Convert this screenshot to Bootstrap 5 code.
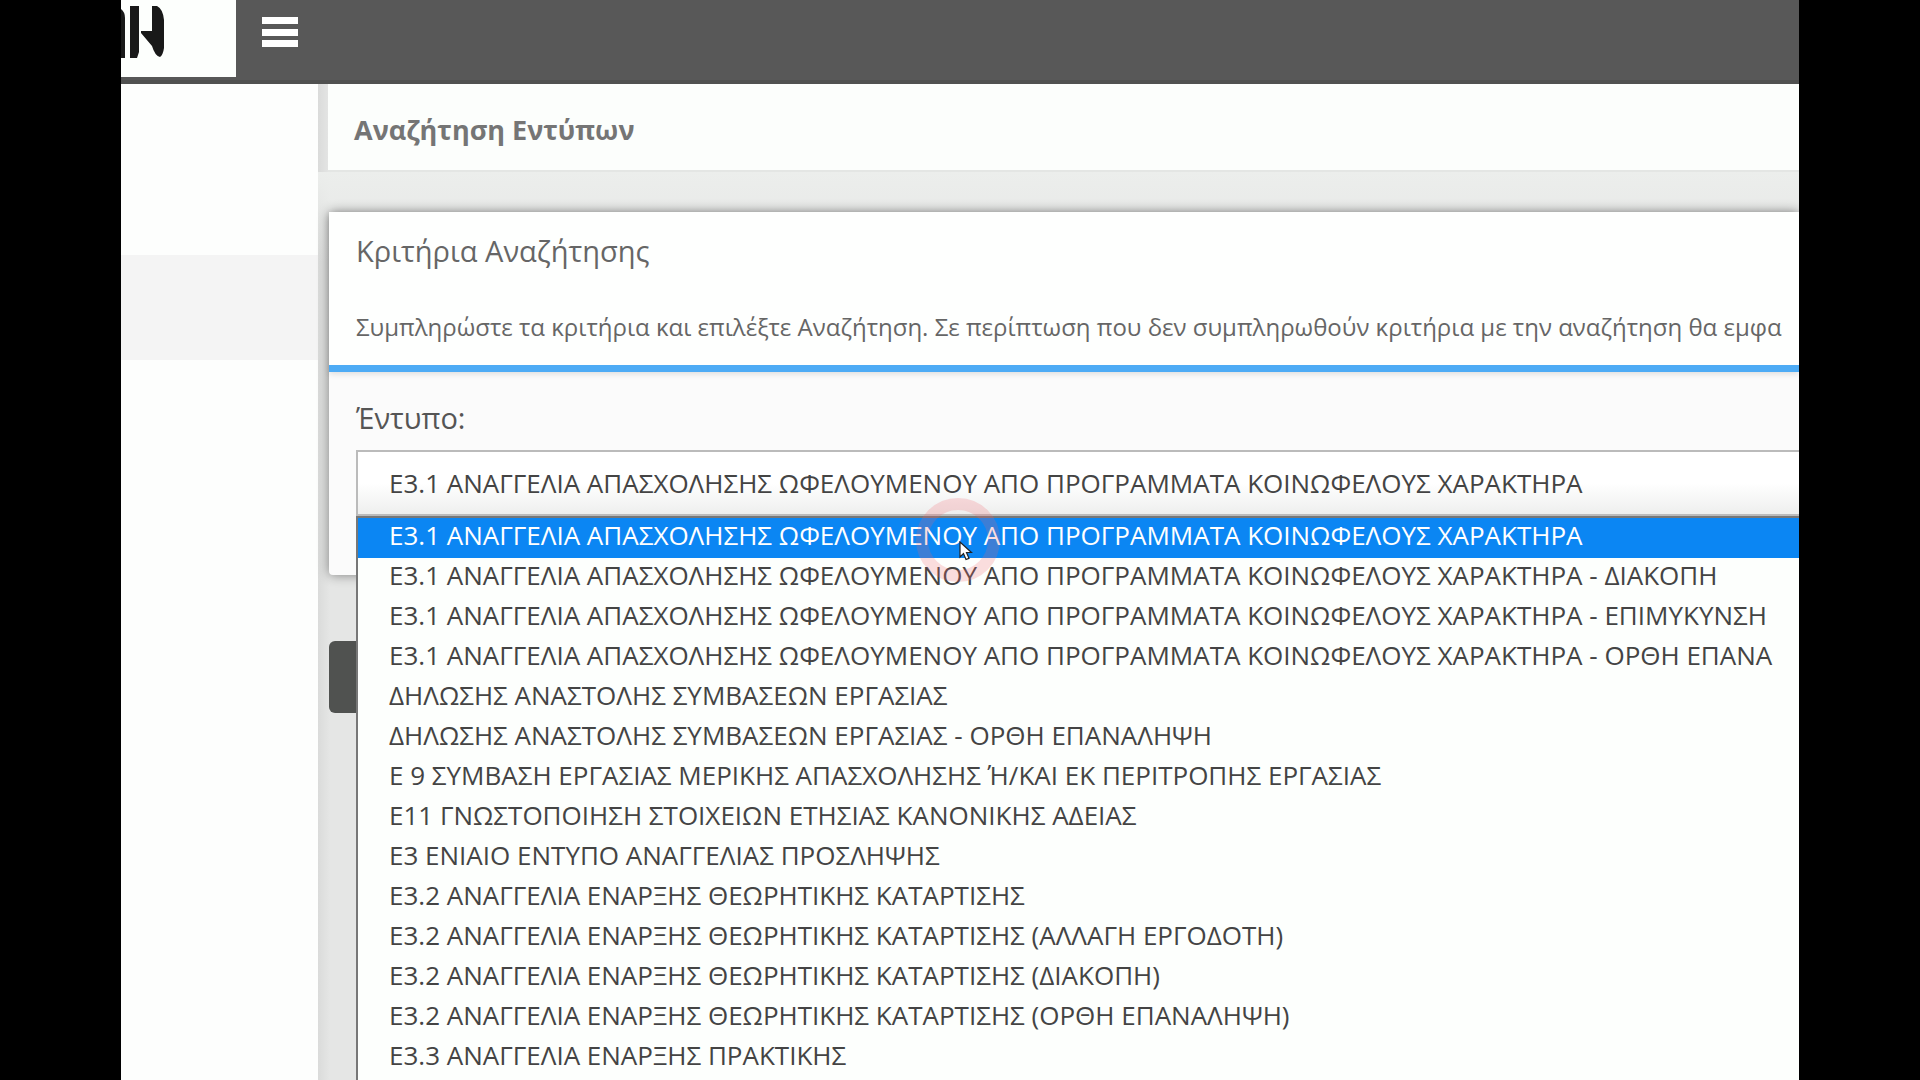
<!DOCTYPE html>
<html lang="el">
<head>
<meta charset="utf-8">
<meta name="viewport" content="width=device-width, initial-scale=1">
<title>Αναζήτηση Εντύπων</title>
<link rel="stylesheet" href="https://cdn.jsdelivr.net/npm/bootstrap@5.3.0/dist/css/bootstrap.min.css">
<style>
body{background:#000;font-family:"Open Sans","Noto Sans",sans-serif;color:#555;padding:0 121px}
.app-shell{background:#fdfefd}
.topbar{background:#585858;border-bottom:4px solid #505150;height:84px}
.brand-box{background:#fdfffd;width:115px;height:77px}
.menu-btn{width:36px;margin-left:26px;margin-top:17px}
.side-nav{width:197px;padding-top:171px}
.side-current{height:105px;background:#f4f4f4}
.content-area{background:linear-gradient(90deg,#dadbda,#e5e6e5 12px);min-width:0}
.page-title{background:#fcfefc;border-bottom:2px solid #e4e6e4;margin-left:10px;height:88px;padding:6px 0 0 26px;font-size:27px;font-weight:700;color:#757575}
.page-body{padding:40px 0 0 11px;background:linear-gradient(#eceeec,rgba(236,238,236,0) 90px)}
.search-card{background:#fbfbfb;border-radius:4px;box-shadow:0 0 12px rgba(0,0,0,.45);padding-bottom:59px}
.criteria-head{background:#fefffe;border-bottom:7px solid #4dabf5;padding:20px 0 20px 27px;box-shadow:0 2px 6px rgba(0,0,0,.12)}
.criteria-title{font-size:29px;line-height:38px;color:#666}
.criteria-note{font-size:24px;line-height:36px;margin-top:39px;color:#666}
.criteria-form{padding:28px 0 0 27px}
.form-type-label{font-size:29px;line-height:36px;margin-bottom:14px;color:#555}
.form-type{font-size:26px;height:66px;border:2px solid #bbb;border-right:0;border-radius:0;padding:0 0 0 31px;color:#444;appearance:none;background:linear-gradient(#fff 50%,#eeefee)}
.type-menu{left:0;right:0;top:100%;border:0;border-left:2px solid #777;border-top:2px solid #777;border-radius:0;padding:0 0 12px;margin:0;background:#fdfffd;min-width:0}
.type-menu .dropdown-item{font-size:26px;line-height:34px;padding:0 0 6px 31px;color:#444}
.type-menu .dropdown-item.active{background:#0b86f3;color:#fff}
.search-btn{background:#505250;border:0;border-radius:6px;color:#fff;font-size:26px;height:72px;width:220px;margin-top:66px}
.click-ring{width:84px;height:84px;left:560px;top:48px;border:12px solid rgba(240,100,110,.22);border-radius:50%;z-index:1100}
.pointer-arrow{left:603px;top:91px;z-index:1101}
</style>
</head>
<body class="vh-100 overflow-hidden">
<div class="app-shell vh-100 overflow-hidden d-flex flex-column">
<header class="topbar d-flex align-items-start flex-shrink-0">
<a class="brand-box d-block" href="#" aria-label="Αρχική"><svg width="50" height="66" viewBox="0 0 50 66" fill="#191919"><path d="M0 9Q4 12 4 18V58H0ZM9 6H18V52L16 58H9ZM31 6H36Q42 9 43 20V48Q42 55 39 57Q34 56 31 46L20 33V31H31Z"/></svg></a>
<button class="menu-btn btn p-0 border-0 d-flex" aria-label="Μενού"><svg width="36" height="30" fill="#fff"><path d="M0 0h36v7H0zM0 12h36v7H0zM0 23h36v7H0z"/></svg></button>
</header>
<div class="d-flex flex-grow-1">
<nav class="side-nav flex-shrink-0" aria-label="Πλοήγηση"><div class="side-current"></div></nav>
<main class="content-area flex-grow-1">
<h1 class="page-title d-flex align-items-center mb-0">Αναζήτηση Εντύπων</h1>
<div class="page-body">
<section class="search-card">
<div class="criteria-head">
<h2 class="criteria-title mb-0 fw-normal">Κριτήρια Αναζήτησης</h2>
<p class="criteria-note mb-0 text-nowrap overflow-hidden">Συμπληρώστε τα κριτήρια και επιλέξτε Αναζήτηση. Σε περίπτωση που δεν συμπληρωθούν κριτήρια με την αναζήτηση θα εμφα</p>
</div>
<div class="criteria-form">
<label class="form-type-label d-block" for="formType">Έντυπο:</label>
<div class="position-relative">
<select class="form-type w-100 d-block" id="formType"><option>Ε3.1 ΑΝΑΓΓΕΛΙΑ ΑΠΑΣΧΟΛΗΣΗΣ ΩΦΕΛΟΥΜΕΝΟΥ ΑΠΟ ΠΡΟΓΡΑΜΜΑΤΑ ΚΟΙΝΩΦΕΛΟΥΣ ΧΑΡΑΚΤΗΡΑ</option></select>
<ul class="type-menu dropdown-menu show">
<li><button class="dropdown-item active">Ε3.1 ΑΝΑΓΓΕΛΙΑ ΑΠΑΣΧΟΛΗΣΗΣ ΩΦΕΛΟΥΜΕΝΟΥ ΑΠΟ ΠΡΟΓΡΑΜΜΑΤΑ ΚΟΙΝΩΦΕΛΟΥΣ ΧΑΡΑΚΤΗΡΑ</button></li>
<li><button class="dropdown-item">Ε3.1 ΑΝΑΓΓΕΛΙΑ ΑΠΑΣΧΟΛΗΣΗΣ ΩΦΕΛΟΥΜΕΝΟΥ ΑΠΟ ΠΡΟΓΡΑΜΜΑΤΑ ΚΟΙΝΩΦΕΛΟΥΣ ΧΑΡΑΚΤΗΡΑ - ΔΙΑΚΟΠΗ</button></li>
<li><button class="dropdown-item">Ε3.1 ΑΝΑΓΓΕΛΙΑ ΑΠΑΣΧΟΛΗΣΗΣ ΩΦΕΛΟΥΜΕΝΟΥ ΑΠΟ ΠΡΟΓΡΑΜΜΑΤΑ ΚΟΙΝΩΦΕΛΟΥΣ ΧΑΡΑΚΤΗΡΑ - ΕΠΙΜΥΚΥΝΣΗ</button></li>
<li><button class="dropdown-item">Ε3.1 ΑΝΑΓΓΕΛΙΑ ΑΠΑΣΧΟΛΗΣΗΣ ΩΦΕΛΟΥΜΕΝΟΥ ΑΠΟ ΠΡΟΓΡΑΜΜΑΤΑ ΚΟΙΝΩΦΕΛΟΥΣ ΧΑΡΑΚΤΗΡΑ - ΟΡΘΗ ΕΠΑΝΑ</button></li>
<li><button class="dropdown-item">ΔΗΛΩΣΗΣ ΑΝΑΣΤΟΛΗΣ ΣΥΜΒΑΣΕΩΝ ΕΡΓΑΣΙΑΣ</button></li>
<li><button class="dropdown-item">ΔΗΛΩΣΗΣ ΑΝΑΣΤΟΛΗΣ ΣΥΜΒΑΣΕΩΝ ΕΡΓΑΣΙΑΣ - ΟΡΘΗ ΕΠΑΝΑΛΗΨΗ</button></li>
<li><button class="dropdown-item">Ε 9 ΣΥΜΒΑΣΗ ΕΡΓΑΣΙΑΣ ΜΕΡΙΚΗΣ ΑΠΑΣΧΟΛΗΣΗΣ Ή/ΚΑΙ ΕΚ ΠΕΡΙΤΡΟΠΗΣ ΕΡΓΑΣΙΑΣ</button></li>
<li><button class="dropdown-item">Ε11 ΓΝΩΣΤΟΠΟΙΗΣΗ ΣΤΟΙΧΕΙΩΝ ΕΤΗΣΙΑΣ ΚΑΝΟΝΙΚΗΣ ΑΔΕΙΑΣ</button></li>
<li><button class="dropdown-item">Ε3 ΕΝΙΑΙΟ ΕΝΤΥΠΟ ΑΝΑΓΓΕΛΙΑΣ ΠΡΟΣΛΗΨΗΣ</button></li>
<li><button class="dropdown-item">Ε3.2 ΑΝΑΓΓΕΛΙΑ ΕΝΑΡΞΗΣ ΘΕΩΡΗΤΙΚΗΣ ΚΑΤΑΡΤΙΣΗΣ</button></li>
<li><button class="dropdown-item">Ε3.2 ΑΝΑΓΓΕΛΙΑ ΕΝΑΡΞΗΣ ΘΕΩΡΗΤΙΚΗΣ ΚΑΤΑΡΤΙΣΗΣ (ΑΛΛΑΓΗ ΕΡΓΟΔΟΤΗ)</button></li>
<li><button class="dropdown-item">Ε3.2 ΑΝΑΓΓΕΛΙΑ ΕΝΑΡΞΗΣ ΘΕΩΡΗΤΙΚΗΣ ΚΑΤΑΡΤΙΣΗΣ (ΔΙΑΚΟΠΗ)</button></li>
<li><button class="dropdown-item">Ε3.2 ΑΝΑΓΓΕΛΙΑ ΕΝΑΡΞΗΣ ΘΕΩΡΗΤΙΚΗΣ ΚΑΤΑΡΤΙΣΗΣ (ΟΡΘΗ ΕΠΑΝΑΛΗΨΗ)</button></li>
<li><button class="dropdown-item">Ε3.3 ΑΝΑΓΓΕΛΙΑ ΕΝΑΡΞΗΣ ΠΡΑΚΤΙΚΗΣ</button></li>
</ul>
<span class="click-ring position-absolute pe-none"></span>
<svg class="pointer-arrow position-absolute pe-none" width="14" height="20" viewBox="0 0 14 20"><path d="M1 1V16L4.500 12.500L7 18.500L10 17.300L7.500 11.500H12.500Z" fill="#fff" stroke="#222" stroke-width="1.200"/></svg>
</div>
</div>
</section>
<button class="search-btn" aria-label="Αναζήτηση"></button>
</div>
</main>
</div>
</div>
<script src="https://cdn.jsdelivr.net/npm/bootstrap@5.3.0/dist/js/bootstrap.bundle.min.js"></script>
</body>
</html>
